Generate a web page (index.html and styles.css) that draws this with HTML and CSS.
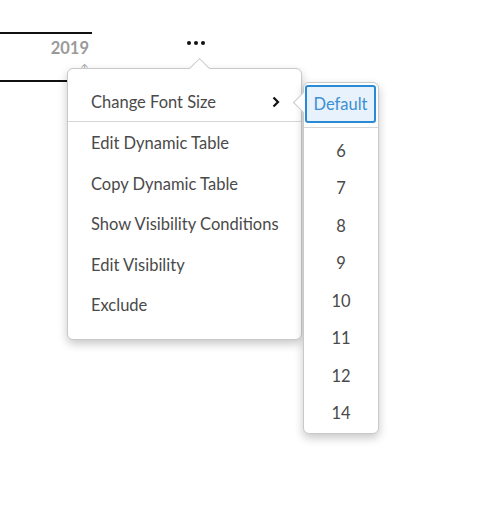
FILE: index.html
```html
<!DOCTYPE html>
<html>
<head>
<meta charset="utf-8">
<link rel="stylesheet" href="styles.css">
</head>
<body>
<div class="stage">
  <div class="table-col">
    <div class="head-cell">2019</div>
    <div class="sort-mark">&#8597;</div>
  </div>
  <div class="more-btn"><span></span><span></span><span></span></div>

  <div class="menu">
    <div class="menu-item has-sub">
      <span>Change Font Size</span>
      <svg class="chev" width="8" height="12" viewBox="0 0 8 12"><polyline points="1.5,1.5 6,6 1.5,10.5" fill="none" stroke="#111" stroke-width="2.2"/></svg>
    </div>
    <div class="sep"></div>
    <div class="menu-item">Edit Dynamic Table</div>
    <div class="menu-item">Copy Dynamic Table</div>
    <div class="menu-item">Show Visibility Conditions</div>
    <div class="menu-item">Edit Visibility</div>
    <div class="menu-item">Exclude</div>
  </div>

  <div class="submenu">
    <div class="default-btn">Default</div>
    <div class="sub-sep"></div>
    <div class="size">6</div>
    <div class="size">7</div>
    <div class="size">8</div>
    <div class="size">9</div>
    <div class="size">10</div>
    <div class="size">11</div>
    <div class="size">12</div>
    <div class="size">14</div>
  </div>
</div>
</body>
</html>
```

FILE: styles.css
```css
html, body {
  margin: 0;
  padding: 0;
  background: #fff;
}
body {
  font-family: Lato, "Open Sans", "Liberation Sans", sans-serif;
  width: 499px;
  height: 507px;
  overflow: hidden;
}
.stage {
  position: relative;
  display: flex;
  align-items: flex-start;
  height: 507px;
}
.table-col {
  margin-top: 32px;
  width: 92px;
  height: 46px;
  border-top: 2px solid #111;
  border-bottom: 2px solid #111;
  box-sizing: content-box;
  position: relative;
}
.head-cell {
  text-align: right;
  padding-right: 3px;
  padding-top: 5px;
  font-size: 16.5px;
  font-weight: 700;
  color: #9a9a9a;
  line-height: 18px;
}
.sort-mark {
  position: absolute;
  right: 3px;
  top: 28px;
  font-size: 12px;
  color: #aaa;
  line-height: 14px;
}
.more-btn {
  margin-left: 95px;
  margin-top: 41px;
  display: flex;
  gap: 3px;
}
.more-btn span {
  width: 4px;
  height: 4px;
  border-radius: 50%;
  background: #111;
}
.menu {
  position: absolute;
  left: 67px;
  top: 68px;
  width: 233px;
  height: 257px;
  background: #fff;
  border: 1px solid #c9c9c9;
  border-radius: 6px;
  box-shadow: 0 4px 10px rgba(0, 0, 0, 0.22);
  padding-top: 13px;
  box-sizing: content-box;
}
.menu::before {
  content: "";
  position: absolute;
  left: 124px;
  top: -8px;
  width: 14px;
  height: 14px;
  background: #fff;
  border-left: 1px solid #c9c9c9;
  border-top: 1px solid #c9c9c9;
  transform: rotate(45deg);
}
.menu-item {
  height: 40.5px;
  display: flex;
  align-items: center;
  justify-content: space-between;
  padding: 0 21px 0 23px;
  font-size: 16.5px;
  color: #4a4a4a;
}
.menu-item.has-sub {
  height: 39px;
}
.chev {
  display: block;
}
.sep {
  height: 1px;
  background: #d6d6d6;
  margin-bottom: 1px;
}
.submenu {
  position: absolute;
  left: 303px;
  top: 82px;
  width: 74px;
  height: 350px;
  background: #fff;
  border: 1px solid #c9c9c9;
  border-radius: 6px;
  box-shadow: 0 4px 10px rgba(0, 0, 0, 0.22);
  box-sizing: content-box;
}
.submenu::before {
  content: "";
  position: absolute;
  left: -8px;
  top: 12px;
  width: 14px;
  height: 14px;
  background: #fff;
  border-left: 1px solid #c9c9c9;
  border-bottom: 1px solid #c9c9c9;
  transform: rotate(45deg);
}
.default-btn {
  position: relative;
  margin: 2px 2px 0 1px;
  height: 34px;
  border: 2px solid #2b8ad6;
  border-radius: 3px;
  background: #e7f2fc;
  color: #3b8fd2;
  font-size: 16.5px;
  display: flex;
  align-items: center;
  justify-content: center;
}
.sub-sep {
  height: 1px;
  background: #d6d6d6;
  margin-top: 4px;
  margin-bottom: 4px;
}
.size {
  height: 37.5px;
  display: flex;
  align-items: center;
  justify-content: center;
  font-size: 16.5px;
  color: #4a4a4a;
}
```
